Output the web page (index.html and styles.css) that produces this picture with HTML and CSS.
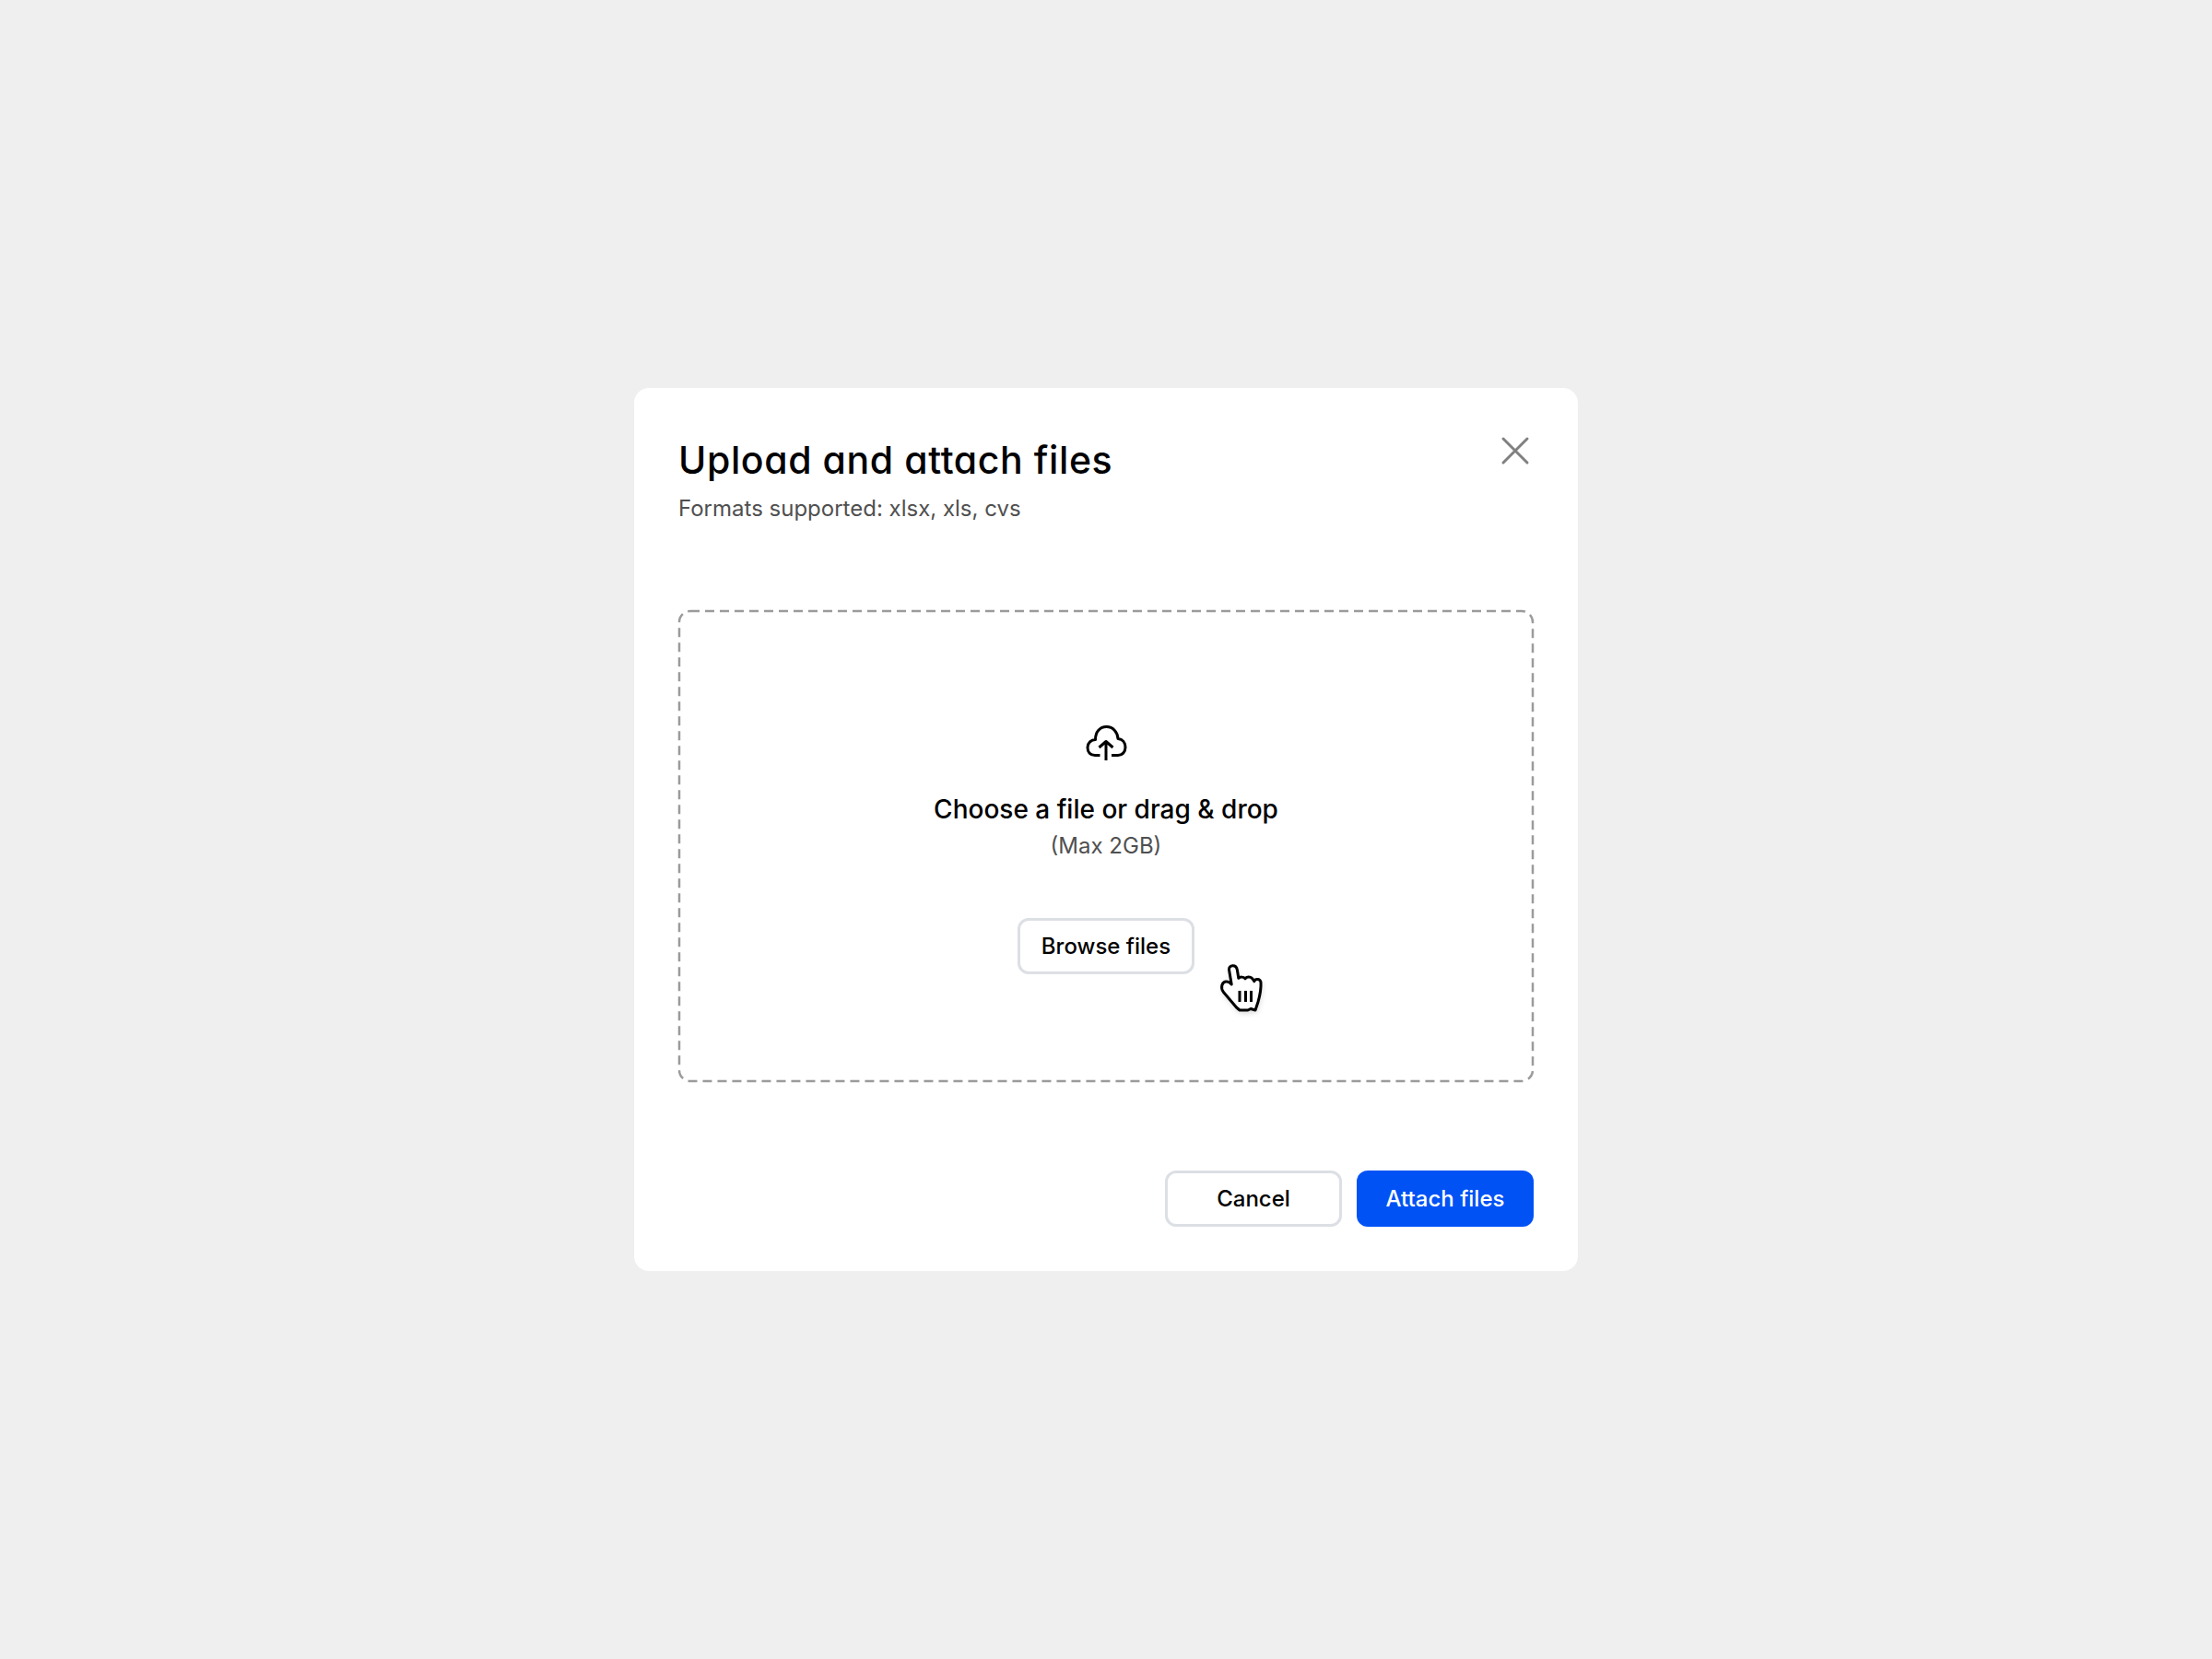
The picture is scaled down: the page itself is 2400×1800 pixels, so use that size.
FILE: index.html
```html
<!DOCTYPE html>
<html lang="en">
<head>
    <meta charset="UTF-8">
    <meta name="viewport" content="width=device-width, initial-scale=1.0">
    <title>Upload and attach files</title>
    <link rel="stylesheet" href="styles.css">
</head>
<body>
    <div class="modal">
        <div class="modal-header">
            <div>
                <h3>Upload and attach files</h3>
                <p class="modal-hint">Formats supported: xlsx, xls, cvs</p>
            </div>
            <svg class="close-icon" viewBox="0 0 40 40" fill="none" stroke="#808080" stroke-width="3" stroke-linecap="round">
                <path d="M7 7l26 26M33 7L7 33"/>
            </svg>
        </div>

        <div class="dropzone">
            <svg class="dropzone-border" width="928" height="510" fill="none">
                <rect x="1" y="0" width="926" height="510" rx="12" stroke="#9b9b9b" stroke-width="2.5" stroke-dasharray="10 6"/>
            </svg>
            <svg class="cloud-icon" viewBox="0 0 48 48" fill="none" stroke="#000" stroke-width="3" stroke-linejoin="round">
                <path d="M17.500 37.500H12C7 37.500 4 34 4 29C4 24 8 20.500 12.500 20.500C12.500 12 17.500 6.500 24.500 6.500C31.500 6.500 36.500 12 37 19.500C42 20 45 24 45 29C45 34 41.500 37.500 37 37.500H30"/>
                <path d="M24 43V23M16.500 29L24 22.500L31.500 29"/>
            </svg>
            <div class="dropzone-title">Choose a file or drag &amp; drop</div>
            <div class="dropzone-hint">(Max 2GB)</div>
            <button type="button" class="btn btn-outline">Browse files</button>
            <svg class="hand-cursor" width="46" height="54" viewBox="0 0 46 54">
                <path class="hand-shadow" transform="translate(1 3)" d="M9.500 6C9.500 0.500 17 0 18.300 6L19.800 15.300C21.500 13.800 25 13.500 27 15.800C29 13.300 33 13.300 35 16L36.800 18.800C38 15.500 43 15.500 44 19.500C44.500 27 43 34 41 41L38 50L33 48.500L30 50H21L17.500 47L3.500 30.500C0 26.500 1.500 19.500 6 19C8.500 18.800 10.500 20 12.200 22Z"/>
                <path d="M9.500 6C9.500 0.500 17 0 18.300 6L19.800 15.300C21.500 13.800 25 13.500 27 15.800C29 13.300 33 13.300 35 16L36.800 18.800C38 15.500 43 15.500 44 19.500C44.500 27 43 34 41 41L38 50L33 48.500L30 50H21L17.500 47L3.500 30.500C0 26.500 1.500 19.500 6 19C8.500 18.800 10.500 20 12.200 22Z" fill="#fff" stroke="#000" stroke-width="3" stroke-linejoin="round"/>
                <path d="M21 29v12M27.500 29v12M33.500 29v12" stroke="#000" stroke-width="3" fill="none"/>
            </svg>
        </div>

        <div class="modal-footer">
            <button type="button" class="btn btn-outline">Cancel</button>
            <button type="button" class="btn btn-primary">Attach files</button>
        </div>
    </div>
</body>
</html>
```

FILE: styles.css
```css
body {
    font-family: Inter, "Liberation Sans", sans-serif;
    background-color: #efefef;
    margin: 0;
    min-height: 1800px;
    display: flex;
    align-items: center;
    justify-content: center;
}

.modal {
    width: 1024px;
    box-sizing: border-box;
    padding: 48px;
    background-color: #fff;
    border-radius: 16px;
}

.modal-header {
    display: flex;
    justify-content: space-between;
    align-items: flex-start;
    height: 194px;
}

h3 {
    margin: 0;
    font-size: 41px;
    line-height: 60px;
    font-weight: 500;
    color: #000;
    letter-spacing: 0.6px;
    font-feature-settings: "cv11";
}

.modal-hint {
    margin: 6px 0 0;
    font-size: 24px;
    line-height: 34px;
    color: #505050;
}

.close-icon {
    width: 40px;
    height: 40px;
}

.dropzone {
    position: relative;
    height: 510px;
    box-sizing: border-box;
    padding-top: 119px;
    display: flex;
    flex-direction: column;
    align-items: center;
}

.dropzone-border {
    position: absolute;
    top: 0;
    left: 0;
    overflow: visible;
}

.cloud-icon {
    width: 48px;
    height: 48px;
}

.dropzone-title {
    margin-top: 30px;
    font-size: 28px;
    line-height: 36px;
    font-weight: 500;
    color: #000;
}

.dropzone-hint {
    margin-top: 5px;
    font-size: 24px;
    line-height: 34px;
    color: #505050;
}

.btn {
    width: 192px;
    height: 61px;
    box-sizing: border-box;
    border-radius: 12px;
    font-family: inherit;
    font-size: 24px;
    font-weight: 500;
    padding: 0;
}

.btn-outline {
    background-color: #fff;
    border: 3px solid #dcdfe4;
    color: #000;
}

.btn-primary {
    background-color: #0052f5;
    border: none;
    color: #fff;
}

.dropzone .btn {
    margin-top: 61px;
}

.hand-cursor {
    position: absolute;
    left: 588px;
    top: 383px;
    overflow: visible;
}

.hand-shadow {
    fill: #000;
    opacity: 0.18;
    filter: blur(3px);
}

.modal-footer {
    display: flex;
    justify-content: flex-end;
    gap: 16px;
    margin-top: 97px;
}
```
